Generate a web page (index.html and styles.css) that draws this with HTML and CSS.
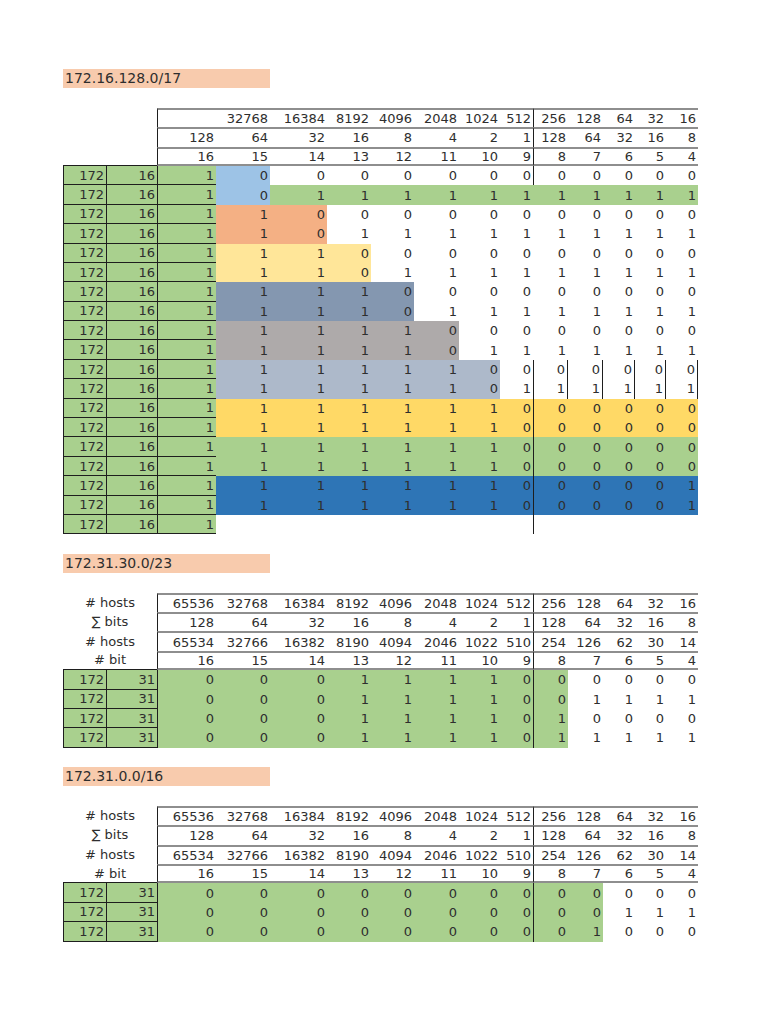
FILE: index.html
```html
<!DOCTYPE html>
<html lang="en">
<head>
<meta charset="utf-8">
<title>Subnet bits</title>
<link rel="stylesheet" href="styles.css">
</head>
<body>
<div class="page">
  <div class="title">172.16.128.0/17</div>
  <div class="sheet">
    <div></div><div></div><div class="h bl"></div><div class="h">32768</div><div class="h">16384</div><div class="h">8192</div><div class="h">4096</div><div class="h">2048</div><div class="h">1024</div><div class="h">512</div><div class="h bl">256</div><div class="h">128</div><div class="h">64</div><div class="h">32</div><div class="h">16</div>
    <div></div><div></div><div class="h bl">128</div><div class="h">64</div><div class="h">32</div><div class="h">16</div><div class="h">8</div><div class="h">4</div><div class="h">2</div><div class="h">1</div><div class="h bl">128</div><div class="h">64</div><div class="h">32</div><div class="h">16</div><div class="h">8</div>
    <div class="bb"></div><div class="bb"></div><div class="h hb bl">16</div><div class="h hb">15</div><div class="h hb">14</div><div class="h hb">13</div><div class="h hb">12</div><div class="h hb">11</div><div class="h hb">10</div><div class="h hb">9</div><div class="h hb bl">8</div><div class="h hb">7</div><div class="h hb">6</div><div class="h hb">5</div><div class="h hb">4</div>

    <div class="g a">172</div><div class="g a">16</div><div class="g a">1</div><div class="lb">0</div><div>0</div><div>0</div><div>0</div><div>0</div><div>0</div><div>0</div><div class="bl">0</div><div>0</div><div>0</div><div>0</div><div>0</div>
    <div class="g a">172</div><div class="g a">16</div><div class="g a">1</div><div class="lb">0</div><div class="g">1</div><div class="g">1</div><div class="g">1</div><div class="g">1</div><div class="g">1</div><div class="g">1</div><div class="g">1</div><div class="g">1</div><div class="g">1</div><div class="g">1</div><div class="g">1</div>
    <div class="g a">172</div><div class="g a">16</div><div class="g a">1</div><div class="or">1</div><div class="or">0</div><div>0</div><div>0</div><div>0</div><div>0</div><div>0</div><div>0</div><div>0</div><div>0</div><div>0</div><div>0</div>
    <div class="g a">172</div><div class="g a">16</div><div class="g a">1</div><div class="or">1</div><div class="or">0</div><div>1</div><div>1</div><div>1</div><div>1</div><div>1</div><div>1</div><div>1</div><div>1</div><div>1</div><div>1</div>
    <div class="g a">172</div><div class="g a">16</div><div class="g a">1</div><div class="ly">1</div><div class="ly">1</div><div class="ly">0</div><div>0</div><div>0</div><div>0</div><div>0</div><div>0</div><div>0</div><div>0</div><div>0</div><div>0</div>
    <div class="g a">172</div><div class="g a">16</div><div class="g a">1</div><div class="ly">1</div><div class="ly">1</div><div class="ly">0</div><div>1</div><div>1</div><div>1</div><div>1</div><div>1</div><div>1</div><div>1</div><div>1</div><div>1</div>
    <div class="g a">172</div><div class="g a">16</div><div class="g a">1</div><div class="sl">1</div><div class="sl">1</div><div class="sl">1</div><div class="sl">0</div><div>0</div><div>0</div><div>0</div><div>0</div><div>0</div><div>0</div><div>0</div><div>0</div>
    <div class="g a">172</div><div class="g a">16</div><div class="g a">1</div><div class="sl">1</div><div class="sl">1</div><div class="sl">1</div><div class="sl">0</div><div>1</div><div>1</div><div>1</div><div>1</div><div>1</div><div>1</div><div>1</div><div>1</div>
    <div class="g a">172</div><div class="g a">16</div><div class="g a">1</div><div class="gr">1</div><div class="gr">1</div><div class="gr">1</div><div class="gr">1</div><div class="gr">0</div><div>0</div><div>0</div><div>0</div><div>0</div><div>0</div><div>0</div><div>0</div>
    <div class="g a">172</div><div class="g a">16</div><div class="g a">1</div><div class="gr">1</div><div class="gr">1</div><div class="gr">1</div><div class="gr">1</div><div class="gr">0</div><div>1</div><div>1</div><div>1</div><div>1</div><div>1</div><div>1</div><div>1</div>
    <div class="g a">172</div><div class="g a">16</div><div class="g a">1</div><div class="bg">1</div><div class="bg">1</div><div class="bg">1</div><div class="bg">1</div><div class="bg">1</div><div class="bg">0</div><div>0</div><div class="bl br">0</div><div class="br">0</div><div class="br">0</div><div class="br">0</div><div class="br">0</div>
    <div class="g a">172</div><div class="g a">16</div><div class="g a">1</div><div class="bg">1</div><div class="bg">1</div><div class="bg">1</div><div class="bg">1</div><div class="bg">1</div><div class="bg">0</div><div>1</div><div class="bl br">1</div><div class="br">1</div><div class="br">1</div><div class="br">1</div><div class="br">1</div>
    <div class="g a">172</div><div class="g a">16</div><div class="g a">1</div><div class="go">1</div><div class="go">1</div><div class="go">1</div><div class="go">1</div><div class="go">1</div><div class="go">1</div><div class="go">0</div><div class="go bl">0</div><div class="go">0</div><div class="go">0</div><div class="go">0</div><div class="go">0</div>
    <div class="g a">172</div><div class="g a">16</div><div class="g a">1</div><div class="go">1</div><div class="go">1</div><div class="go">1</div><div class="go">1</div><div class="go">1</div><div class="go">1</div><div class="go">0</div><div class="go bl">0</div><div class="go">0</div><div class="go">0</div><div class="go">0</div><div class="go">0</div>
    <div class="g a">172</div><div class="g a">16</div><div class="g a">1</div><div class="g">1</div><div class="g">1</div><div class="g">1</div><div class="g">1</div><div class="g">1</div><div class="g">1</div><div class="g">0</div><div class="g bl">0</div><div class="g">0</div><div class="g">0</div><div class="g">0</div><div class="g">0</div>
    <div class="g a">172</div><div class="g a">16</div><div class="g a">1</div><div class="g">1</div><div class="g">1</div><div class="g">1</div><div class="g">1</div><div class="g">1</div><div class="g">1</div><div class="g">0</div><div class="g bl">0</div><div class="g">0</div><div class="g">0</div><div class="g">0</div><div class="g">0</div>
    <div class="g a">172</div><div class="g a">16</div><div class="g a">1</div><div class="db">1</div><div class="db">1</div><div class="db">1</div><div class="db">1</div><div class="db">1</div><div class="db">1</div><div class="db">0</div><div class="db bl">0</div><div class="db">0</div><div class="db">0</div><div class="db">0</div><div class="db">1</div>
    <div class="g a">172</div><div class="g a">16</div><div class="g a">1</div><div class="db">1</div><div class="db">1</div><div class="db">1</div><div class="db">1</div><div class="db">1</div><div class="db">1</div><div class="db">0</div><div class="db bl">0</div><div class="db">0</div><div class="db">0</div><div class="db">0</div><div class="db">1</div>
    <div class="g a">172</div><div class="g a">16</div><div class="g a">1</div><div class="sp7"></div><div class="sp5 bl"></div>
  </div>

  <div class="title">172.31.30.0/23</div>
  <div class="sheet">
    <div class="lab"># hosts</div><div class="h bl">65536</div><div class="h">32768</div><div class="h">16384</div><div class="h">8192</div><div class="h">4096</div><div class="h">2048</div><div class="h">1024</div><div class="h">512</div><div class="h bl">256</div><div class="h">128</div><div class="h">64</div><div class="h">32</div><div class="h">16</div>
    <div class="lab">∑ bits</div><div class="h bl">128</div><div class="h">64</div><div class="h">32</div><div class="h">16</div><div class="h">8</div><div class="h">4</div><div class="h">2</div><div class="h">1</div><div class="h bl">128</div><div class="h">64</div><div class="h">32</div><div class="h">16</div><div class="h">8</div>
    <div class="lab"># hosts</div><div class="h bl">65534</div><div class="h">32766</div><div class="h">16382</div><div class="h">8190</div><div class="h">4094</div><div class="h">2046</div><div class="h">1022</div><div class="h">510</div><div class="h bl">254</div><div class="h">126</div><div class="h">62</div><div class="h">30</div><div class="h">14</div>
    <div class="lab bb"># bit</div><div class="h hb bl">16</div><div class="h hb">15</div><div class="h hb">14</div><div class="h hb">13</div><div class="h hb">12</div><div class="h hb">11</div><div class="h hb">10</div><div class="h hb">9</div><div class="h hb bl">8</div><div class="h hb">7</div><div class="h hb">6</div><div class="h hb">5</div><div class="h hb">4</div>

    <div class="g a">172</div><div class="g a">31</div><div class="g bl">0</div><div class="g">0</div><div class="g">0</div><div class="g">1</div><div class="g">1</div><div class="g">1</div><div class="g">1</div><div class="g">0</div><div class="g bl">0</div><div>0</div><div>0</div><div>0</div><div>0</div>
    <div class="g a">172</div><div class="g a">31</div><div class="g bl">0</div><div class="g">0</div><div class="g">0</div><div class="g">1</div><div class="g">1</div><div class="g">1</div><div class="g">1</div><div class="g">0</div><div class="g bl">0</div><div>1</div><div>1</div><div>1</div><div>1</div>
    <div class="g a">172</div><div class="g a">31</div><div class="g bl">0</div><div class="g">0</div><div class="g">0</div><div class="g">1</div><div class="g">1</div><div class="g">1</div><div class="g">1</div><div class="g">0</div><div class="g bl">1</div><div>0</div><div>0</div><div>0</div><div>0</div>
    <div class="g a">172</div><div class="g a">31</div><div class="g bl">0</div><div class="g">0</div><div class="g">0</div><div class="g">1</div><div class="g">1</div><div class="g">1</div><div class="g">1</div><div class="g">0</div><div class="g bl">1</div><div>1</div><div>1</div><div>1</div><div>1</div>
  </div>

  <div class="title">172.31.0.0/16</div>
  <div class="sheet">
    <div class="lab"># hosts</div><div class="h bl">65536</div><div class="h">32768</div><div class="h">16384</div><div class="h">8192</div><div class="h">4096</div><div class="h">2048</div><div class="h">1024</div><div class="h">512</div><div class="h bl">256</div><div class="h">128</div><div class="h">64</div><div class="h">32</div><div class="h">16</div>
    <div class="lab">∑ bits</div><div class="h bl">128</div><div class="h">64</div><div class="h">32</div><div class="h">16</div><div class="h">8</div><div class="h">4</div><div class="h">2</div><div class="h">1</div><div class="h bl">128</div><div class="h">64</div><div class="h">32</div><div class="h">16</div><div class="h">8</div>
    <div class="lab"># hosts</div><div class="h bl">65534</div><div class="h">32766</div><div class="h">16382</div><div class="h">8190</div><div class="h">4094</div><div class="h">2046</div><div class="h">1022</div><div class="h">510</div><div class="h bl">254</div><div class="h">126</div><div class="h">62</div><div class="h">30</div><div class="h">14</div>
    <div class="lab bb"># bit</div><div class="h hb bl">16</div><div class="h hb">15</div><div class="h hb">14</div><div class="h hb">13</div><div class="h hb">12</div><div class="h hb">11</div><div class="h hb">10</div><div class="h hb">9</div><div class="h hb bl">8</div><div class="h hb">7</div><div class="h hb">6</div><div class="h hb">5</div><div class="h hb">4</div>

    <div class="g a">172</div><div class="g a">31</div><div class="g bl">0</div><div class="g">0</div><div class="g">0</div><div class="g">0</div><div class="g">0</div><div class="g">0</div><div class="g">0</div><div class="g">0</div><div class="g bl">0</div><div class="g">0</div><div>0</div><div>0</div><div>0</div>
    <div class="g a">172</div><div class="g a">31</div><div class="g bl">0</div><div class="g">0</div><div class="g">0</div><div class="g">0</div><div class="g">0</div><div class="g">0</div><div class="g">0</div><div class="g">0</div><div class="g bl">0</div><div class="g">0</div><div>1</div><div>1</div><div>1</div>
    <div class="g a">172</div><div class="g a">31</div><div class="g bl">0</div><div class="g">0</div><div class="g">0</div><div class="g">0</div><div class="g">0</div><div class="g">0</div><div class="g">0</div><div class="g">0</div><div class="g bl">0</div><div class="g">1</div><div>0</div><div>0</div><div>0</div>
  </div>
</div>
</body>
</html>
```

FILE: styles.css
```css
* {
  box-sizing: border-box;
  margin: 0;
  padding: 0;
}

body {
  background: #ffffff;
  font-family: "DejaVu Sans", Verdana, sans-serif;
  font-size: 13px;
  color: #2e2e2e;
}

.page {
  display: flex;
  flex-direction: column;
  align-items: flex-start;
  padding: 69px 0 0 63px;
}

.title {
  width: 207px;
  height: 19.4px;
  line-height: 19.4px;
  padding-left: 2px;
  font-size: 14px;
  background: #f8cbad;
  margin-bottom: 19.4px;
}

.sheet {
  display: grid;
  grid-template-columns: 43px 51px 59px 54px 57px 44px 43px 45px 41px 33px 35px 35px 32px 31px 32px;
  grid-auto-rows: 19.4px;
  margin-bottom: 19.4px;
}

.sheet > div {
  display: flex;
  align-items: center;
  justify-content: flex-end;
  padding-right: 2px;
  white-space: nowrap;
}

.sheet > .lab {
  grid-column: span 2;
  justify-content: center;
  padding-right: 0;
}

.sp7 { grid-column: span 7; }
.sp5 { grid-column: span 5; }

/* borders */
.h  { border-top: 2px solid #8e8e8e; }
.hb { border-bottom: 2px solid #8e8e8e; }
.bl { border-left: 1px solid #1e1e1e; }
.br { border-right: 1px solid #1e1e1e; }
.bb { border-bottom: 1px solid #1e1e1e; }
.a  { border-left: 1px solid #1e1e1e; border-bottom: 1px solid #1e1e1e; }

/* fills */
.g  { background: #a9d08e; }
.lb { background: #9dc3e6; }
.or { background: #f4b084; }
.ly { background: #ffe699; }
.sl { background: #8497b0; }
.gr { background: #aeaaaa; }
.bg { background: #adb9ca; }
.go { background: #ffd966; }
.db { background: #2e75b6; }
```
